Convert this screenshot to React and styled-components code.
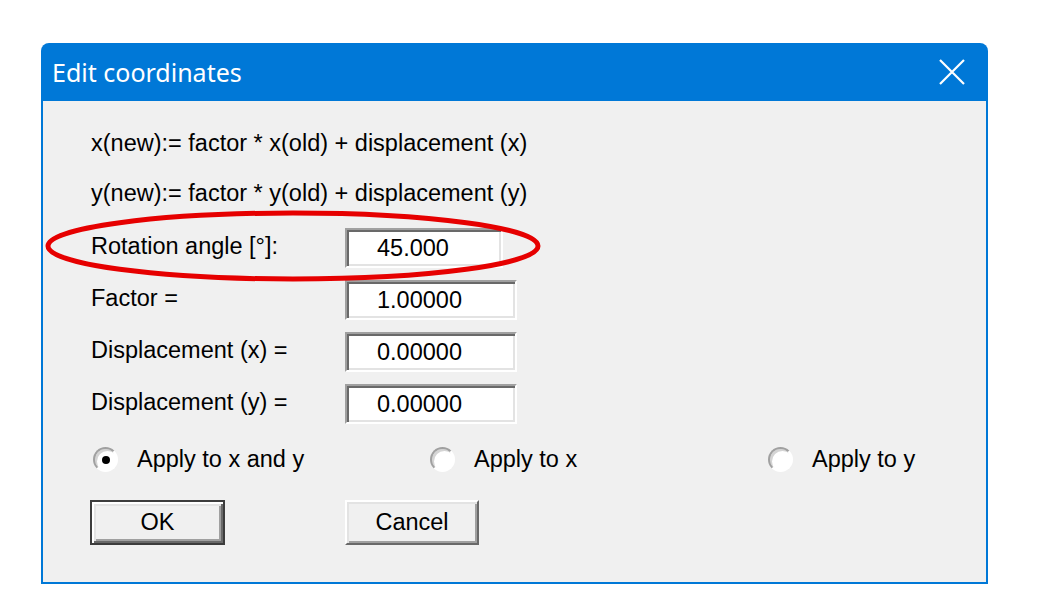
import React from "react";
import styled, { createGlobalStyle } from "styled-components";

const GlobalStyle = createGlobalStyle`
  html, body {
    margin: 0;
    padding: 0;
    background: #ffffff;
  }
  body {
    font-family: "Liberation Sans", Arial, sans-serif;
  }
`;

const Page = styled.div`
  width: 1038px;
  height: 610px;
  padding: 43px 0 0 41px;
  box-sizing: border-box;
  position: relative;
`;

const Window = styled.div`
  width: 947px;
  height: 541px;
  background: #0078d7;
  border-radius: 8px 8px 0 0;
  display: flex;
  flex-direction: column;
  padding: 0 2px 2px 2px;
  box-sizing: border-box;
  position: relative;
`;

const TitleBar = styled.div`
  height: 58px;
  display: flex;
  align-items: center;
  justify-content: space-between;
  padding: 0 21px 0 9px;
  color: #ffffff;
  font-family: "Noto Sans", "Open Sans", sans-serif;
  font-size: 25px;
`;

const CloseIcon = styled.svg`
  width: 26px;
  height: 26px;
  display: block;
`;

const Body = styled.div`
  flex: 1;
  background: #f0f0f0;
  padding: 17px 0 0 48px;
  color: #000000;
  font-size: 23.5px;
`;

const Formula = styled.div`
  height: 50px;
  line-height: 50px;
  white-space: nowrap;
`;

const Form = styled.div`
  display: grid;
  grid-template-columns: 254px auto;
  row-gap: 12px;
  margin-top: 10px;
  align-items: center;
`;

const Label = styled.div`
  white-space: nowrap;
  margin-top: -4px;
`;

const Field = styled.div`
  width: ${(p) => p.$width}px;
  height: 40px;
  box-sizing: border-box;
  background: #ffffff;
  border: 2px solid;
  border-color: #a0a0a0 #ffffff #ffffff #a0a0a0;
  box-shadow: inset 2px 2px 0 #696969, inset -2px -2px 0 #e3e3e3;
  padding-left: 30px;
  display: flex;
  align-items: center;
`;

const RadioRow = styled.div`
  display: grid;
  grid-template-columns: 337px 338px auto;
  margin: 22px 0 0 2px;
  height: 26px;
  align-items: center;
`;

const RadioItem = styled.label`
  display: flex;
  align-items: center;
  gap: 19px;
  white-space: nowrap;
`;

const RadioCircle = styled.span`
  width: 25px;
  height: 25px;
  box-sizing: border-box;
  border-radius: 50%;
  border: 2px solid;
  border-color: #a0a0a0 #ffffff #ffffff #a0a0a0;
  background: #ffffff;
  box-shadow: inset 2px 2px 0 #d4d4d4;
  display: flex;
  align-items: center;
  justify-content: center;
  &::after {
    content: "";
    width: 8px;
    height: 8px;
    border-radius: 50%;
    background: ${(p) => (p.$checked ? "#000000" : "transparent")};
  }
`;

const ButtonRow = styled.div`
  display: grid;
  grid-template-columns: 255px auto;
  margin-top: 28px;
  margin-left: -1px;
`;

const Button = styled.div`
  width: ${(p) => p.$width}px;
  height: 45px;
  box-sizing: border-box;
  background: #f0f0f0;
  border: 2px solid;
  border-color: ${(p) => (p.$default ? "#3c3c3c" : "#ffffff #696969 #696969 #ffffff")};
  box-shadow: ${(p) =>
    p.$default
      ? "inset 2px 2px 0 #ffffff, inset -2px -2px 0 #696969, inset 4px 4px 0 #e3e3e3, inset -4px -4px 0 #a0a0a0"
      : "inset 2px 2px 0 #e3e3e3, inset -2px -2px 0 #a0a0a0"};
  display: flex;
  align-items: center;
  justify-content: center;
`;

const Marker = styled.svg`
  position: absolute;
  left: 0;
  top: 0;
  pointer-events: none;
`;

export default function App() {
  return (
    <>
      <GlobalStyle />
      <Page>
        <Window>
          <TitleBar>
            <span>Edit coordinates</span>
            <CloseIcon viewBox="0 0 26 26">
              <path d="M1 1 L25 25 M25 1 L1 25" stroke="#ffffff" strokeWidth="2.2" fill="none" />
            </CloseIcon>
          </TitleBar>
          <Body>
            <Formula>x(new):= factor * x(old) + displacement (x)</Formula>
            <Formula>y(new):= factor * y(old) + displacement (y)</Formula>
            <Form>
              <Label>Rotation angle [°]:</Label>
              <Field $width={158}>45.000</Field>
              <Label>Factor =</Label>
              <Field $width={172}>1.00000</Field>
              <Label>Displacement (x) =</Label>
              <Field $width={172}>0.00000</Field>
              <Label>Displacement (y) =</Label>
              <Field $width={172}>0.00000</Field>
            </Form>
            <RadioRow>
              <RadioItem>
                <RadioCircle $checked />
                Apply to x and y
              </RadioItem>
              <RadioItem>
                <RadioCircle />
                Apply to x
              </RadioItem>
              <RadioItem>
                <RadioCircle />
                Apply to y
              </RadioItem>
            </RadioRow>
            <ButtonRow>
              <Button $width={135} $default>OK</Button>
              <Button $width={134}>Cancel</Button>
            </ButtonRow>
          </Body>
        </Window>
        <Marker width="1038" height="610">
          <ellipse cx="293" cy="246" rx="245" ry="33" fill="none" stroke="#e60000" strokeWidth="5" />
        </Marker>
      </Page>
    </>
  );
}
